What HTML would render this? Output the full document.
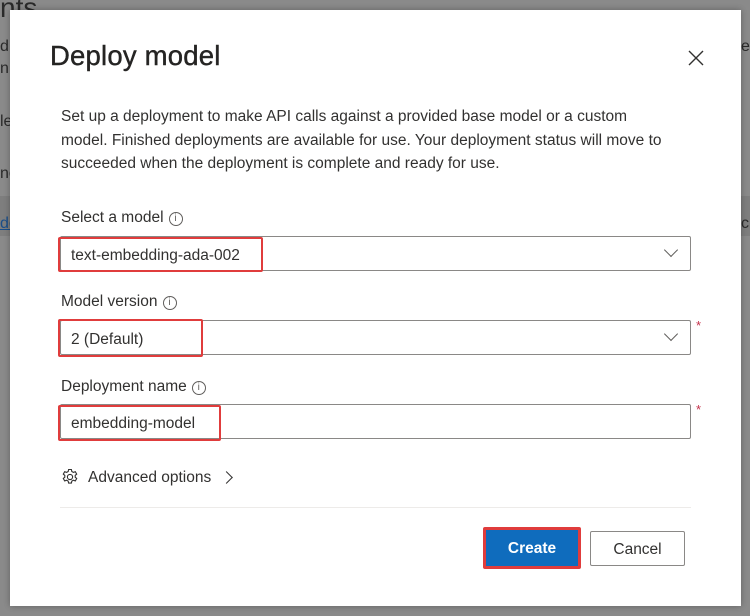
<!DOCTYPE html>
<html><head><style>
*{box-sizing:border-box;margin:0;padding:0}
body{width:750px;height:616px;background:#8a8a8a;font-family:"Liberation Sans",sans-serif;position:relative;overflow:hidden;color:#323130}
.bg{position:absolute;color:#2a2a2a;font-size:16px}
.dlg{position:absolute;left:10px;top:10px;width:731px;height:596px;background:#fff;box-shadow:0 0 6px rgba(0,0,0,.3)}
.a{position:absolute}
h1{position:absolute;left:40px;top:30px;font-size:27.5px;font-weight:normal;color:#252423;letter-spacing:0.2px;-webkit-text-stroke:0.4px #252423}
p{position:absolute;left:51px;top:95px;width:610px;font-size:15.5px;line-height:23.5px}
.lbl{position:absolute;left:51px;font-size:15.5px}
.info{display:inline-block;width:14px;height:14px;border:1px solid #605e5c;border-radius:50%;font-size:10px;text-align:center;line-height:12px;vertical-align:1px;margin-left:5px;color:#605e5c}
.box{position:absolute;left:50px;width:631px;height:35px;border:1px solid #8a8886;border-radius:2px}
.val{position:absolute;left:61px;font-size:15.5px}
.red{position:absolute;border:2.5px solid #e03c3c;border-radius:2px}
.chev{position:absolute;left:656px;width:10px;height:10px;border-right:1.3px solid #605e5c;border-bottom:1.3px solid #605e5c;transform:rotate(45deg)}
.star{position:absolute;left:686px;color:#c4314b;font-size:13px}
</style></head><body>
<div class="bg" style="left:0;top:-8px;font-size:28px">nts</div>
<div class="bg" style="left:0;top:38px">d</div>
<div class="bg" style="left:0;top:60px">n</div>
<div class="bg" style="left:0;top:113px">le</div>
<div class="bg" style="left:0;top:165px">ne</div>
<div class="a" style="left:0;top:196px;width:750px;height:40px;background:#7e7e7e"></div>
<div class="bg" style="left:0;top:215px;color:#1a4e8a;text-decoration:underline">de</div>
<div class="bg" style="left:741px;top:38px">e</div>
<div class="bg" style="left:741px;top:215px">c</div>
<div class="dlg">
<h1>Deploy model</h1>
<svg class="a" style="left:678px;top:40px" width="16" height="16"><path d="M1 1L15 15M15 1L1 15" stroke="#323130" stroke-width="1.4"/></svg>
<p>Set up a deployment to make API calls against a provided base model or a custom model. Finished deployments are available for use. Your deployment status will move to succeeded when the deployment is complete and ready for use.</p>
<div class="lbl" style="top:199px">Select a model<span class="info">i</span></div>
<div class="box" style="top:226px"></div>
<div class="chev" style="top:235px"></div>
<div class="val" style="top:237px">text-embedding-ada-002</div>
<div class="red" style="left:48px;top:227px;width:205px;height:35px"></div>
<div class="lbl" style="top:283px">Model version<span class="info">i</span></div>
<div class="box" style="top:310px"></div>
<div class="chev" style="top:319px"></div>
<div class="star" style="top:308px">*</div>
<div class="val" style="top:321px">2 (Default)</div>
<div class="red" style="left:48px;top:309px;width:145px;height:38px"></div>
<div class="lbl" style="top:368px">Deployment name<span class="info">i</span></div>
<div class="box" style="top:394px"></div>
<div class="star" style="top:392px">*</div>
<div class="val" style="top:405px">embedding-model</div>
<div class="red" style="left:48px;top:395px;width:163px;height:36px"></div>
<svg class="a" style="left:51px;top:458px" width="18" height="18" viewBox="0 0 18 18"><circle cx="9" cy="9" r="2.6" fill="none" stroke="#323130" stroke-width="1.1"/><path d="M7.6 1.5h2.8l.4 2 1.6.9 1.9-.7 1.4 2.4-1.5 1.3v1.8l1.5 1.3-1.4 2.4-1.9-.7-1.6.9-.4 2H7.6l-.4-2-1.6-.9-1.9.7-1.4-2.4 1.5-1.3V7.4L2.3 6.1l1.4-2.4 1.9.7 1.6-.9z" fill="none" stroke="#323130" stroke-width="1.1"/></svg>
<div class="lbl" style="left:78px;top:459px">Advanced options</div>
<div class="a" style="left:212px;top:463px;width:9px;height:9px;border-right:1.3px solid #323130;border-top:1.3px solid #323130;transform:rotate(45deg)"></div>
<div class="a" style="left:50px;top:497px;width:631px;height:1px;background:#edebe9"></div>
<div class="red" style="left:473px;top:517px;width:98px;height:42px;border-width:3px"></div>
<div class="a" style="left:476px;top:520px;width:92px;height:36px;background:#0f6cbd;color:#fff;font-size:15.5px;font-weight:bold;text-align:center;line-height:38px">Create</div>
<div class="a" style="left:580px;top:521px;width:95px;height:35px;border:1px solid #8a8886;border-radius:2px;font-size:15.5px;text-align:center;line-height:35px">Cancel</div>
</div>
</body></html>
